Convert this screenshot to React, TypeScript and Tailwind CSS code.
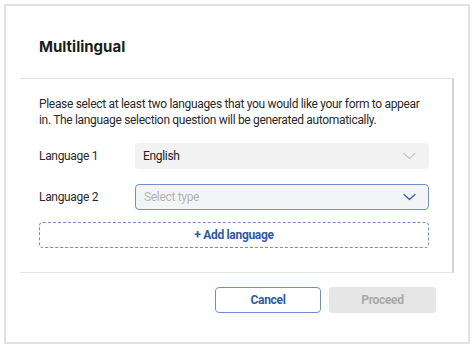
import React from 'react'

// Small chevron used inside the select boxes
function Chevron({ color }: { color: string }) {
  return (
    <svg width="13" height="8" viewBox="0 0 13 8" fill="none">
      <path d="M1 1.5l5.5 5 5.5-5" stroke={color} strokeWidth="1.3" strokeLinecap="round" strokeLinejoin="round" />
    </svg>
  )
}

export default function App() {
  return (
    <div className="w-[474px] h-[347px] bg-white p-1 tracking-[-0.02em]" style={{ fontFamily: 'Roboto, "Noto Sans", sans-serif' }}>
      <div className="w-[466px] h-[340px] border-2 border-[#e2e2e2] bg-white flex flex-col">
        {/* Header */}
        <div className="h-[72px] px-[33px] pt-[31px] shrink-0">
          <h1 className="text-[15px] leading-[20px] font-bold text-[#1c1c1c] font-['Inter'] tracking-normal">Multilingual</h1>
        </div>

        {/* Body */}
        <div className="mx-[14px] h-[195px] border-t border-b border-r-2 border-t-[#e4e4e4] border-b-[#e4e4e4] border-r-[#d4d4d4] pl-[19px] pr-[23px] pt-[17px] shrink-0">
          <p className="text-[12px] leading-[16px] text-[#2a2a2a] w-[392px]">
            Please select at least two languages that you would like your form to appear in. The language selection question will be generated automatically.
          </p>

          <div className="mt-[15px] flex items-center">
            <span className="w-[96px] text-[12px] text-[#2a2a2a]">Language 1</span>
            <div className="w-[294px] h-[26px] rounded bg-[#f2f2f2] flex items-center justify-between pl-2 pr-[13px]">
              <span className="text-[12px] text-[#1f1f1f]">English</span>
              <Chevron color="#c9c9c9" />
            </div>
          </div>

          <div className="mt-[15px] flex items-center">
            <span className="w-[96px] text-[12px] text-[#2a2a2a]">Language 2</span>
            <div className="w-[294px] h-[26px] rounded border border-[#7190c9] bg-[#f3f4f6] flex items-center justify-between pl-2 pr-[12px]">
              <span className="text-[12px] text-[#b4b4b4]">Select type</span>
              <Chevron color="#3f5f9e" />
            </div>
          </div>

          <button className="mt-[12px] w-[390px] h-[26px] rounded border border-dashed border-[#6f8fca] flex items-center justify-center text-[12px] font-bold text-[#2f5aa5]">
            + Add language
          </button>
        </div>

        {/* Footer */}
        <div className="flex justify-end gap-2 pr-[32px] pt-[14px]">
          <button className="w-[106px] h-[26px] rounded border border-[#6f8fca] bg-white text-[12px] font-bold text-[#2f5aa5]">
            Cancel
          </button>
          <button className="w-[107px] h-[26px] rounded bg-[#e6e6e6] text-[12px] font-bold text-[#a9a9a9]">
            Proceed
          </button>
        </div>
      </div>
    </div>
  )
}
